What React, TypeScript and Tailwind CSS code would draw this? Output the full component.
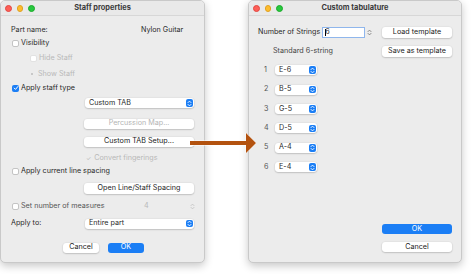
import React from "react";

const font = { fontFamily: "Inter, 'Liberation Sans', sans-serif" };

const Lights = () => (
  <div className="flex items-center gap-[5px] absolute left-[4px] top-[4px]">
    <span className="w-[6.5px] h-[6.5px] rounded-full bg-[#fe5f57] border border-[#e14640]" />
    <span className="w-[6.5px] h-[6.5px] rounded-full bg-[#febc2e] border border-[#dfa123]" />
    <span className="w-[6.5px] h-[6.5px] rounded-full bg-[#28c840] border border-[#1aab29]" />
  </div>
);

const Window = ({ title, className, children }) => (
  <div
    className={`relative shrink-0 h-[263px] rounded-[5px] bg-[#ececec] border border-[#c9c9c9] shadow-[0_3px_9px_rgba(0,0,0,0.22)] overflow-hidden ${className}`}
  >
    <div className="relative h-[15px] bg-[#e9e9e9] border-b border-[#d7d7d7] flex items-center justify-center">
      <Lights />
      <span className="text-[7.4px] font-bold text-[#3a3a3a]">{title}</span>
    </div>
    {children}
  </div>
);

const Chevrons = ({ color = "white" }) => (
  <svg width="5" height="7" viewBox="0 0 5 7">
    <path d="M1 2.6 L2.5 1.1 L4 2.6 M1 4.4 L2.5 5.9 L4 4.4" fill="none" stroke={color} strokeWidth="0.9" strokeLinecap="round" strokeLinejoin="round" />
  </svg>
);

const Checkbox = ({ checked = false, faint = false }) =>
  checked ? (
    <span className="w-[7px] h-[7px] rounded-[2px] bg-[#1b7ef5] flex items-center justify-center">
      <svg width="6" height="6" viewBox="0 0 6 6">
        <path d="M1.2 3.1 L2.5 4.4 L4.9 1.5" fill="none" stroke="white" strokeWidth="1" strokeLinecap="round" strokeLinejoin="round" />
      </svg>
    </span>
  ) : (
    <span
      className={`w-[7px] h-[7px] rounded-[2px] bg-white border ${faint ? "border-[#e2e2e2]" : "border-[#c4c4c4]"}`}
    />
  );

const Popup = ({ label, className }) => (
  <div
    className={`h-[10px] bg-white rounded-[3px] shadow-[0_0.5px_1.5px_rgba(0,0,0,0.3)] flex items-center justify-between pl-[4px] pr-[1.5px] ${className}`}
  >
    <span className="text-[7.2px] text-[#2a2a2a]">{label}</span>
    <span className="w-[6.5px] h-[7.5px] rounded-[2px] bg-[#1b7ef5] flex items-center justify-center">
      <Chevrons />
    </span>
  </div>
);

const Btn = ({ label, disabled = false, primary = false, className = "" }) => (
  <div
    className={`h-[10.5px] rounded-[3px] flex items-center justify-center text-[7.2px] ${
      primary
        ? "bg-[#1b7ef5] text-white"
        : "bg-white shadow-[0_0.5px_1.5px_rgba(0,0,0,0.3)] " + (disabled ? "text-[#b4b4b4]" : "text-[#222]")
    } ${className}`}
  >
    {label}
  </div>
);

const StaffProperties = () => (
  <Window title="Staff properties" className="w-[205px]">
    <div className="text-[7.2px] text-[#2a2a2a]">
      <div className="h-[12px] mt-[8px] flex items-center pl-[10px]">
        <span className="w-[130px]">Part name:</span>
        <span>Nylon Guitar</span>
      </div>
      <div className="h-[12px] mt-[1px] flex items-center pl-[11px] gap-[2px]">
        <Checkbox />
        <span>Visibility</span>
      </div>
      <div className="h-[12px] mt-[3px] flex items-center pl-[29px] gap-[2px] text-[#b8b8b8]">
        <Checkbox faint />
        <span>Hide Staff</span>
      </div>
      <div className="h-[12px] mt-[4px] flex items-center pl-[30px] gap-[5px] text-[#b8b8b8]">
        <span className="w-[2px] h-[2px] rounded-full bg-[#bdbdbd]" />
        <span>Show Staff</span>
      </div>
      <div className="h-[12px] mt-[2px] flex items-center pl-[11px] gap-[2px]">
        <Checkbox checked />
        <span>Apply staff type</span>
      </div>
      <Popup label="Custom TAB" className="ml-[84px] w-[109px] mt-[4px]" />
      <Btn label="Percussion Map..." disabled className="ml-[83px] w-[110px] mt-[10.5px]" />
      <Btn label="Custom TAB Setup..." className="ml-[83px] w-[110px] mt-[7.5px]" />
      <div className="h-[12px] mt-[5px] flex items-center pl-[85px] gap-[3px] text-[#b8b8b8]">
        <span className="text-[6px]">✓</span>
        <span>Convert fingerings</span>
      </div>
      <div className="h-[12px] mt-[1px] flex items-center pl-[11px] gap-[2px]">
        <Checkbox />
        <span>Apply current line spacing</span>
      </div>
      <Btn label="Open Line/Staff Spacing" className="ml-[83px] w-[110px] mt-[6px]" />
      <div className="h-[12px] mt-[6.5px] flex items-center pl-[11px]">
        <Checkbox />
        <span className="ml-[2px] w-[123px] text-[#555]">Set number of measures</span>
        <span className="w-[46px] text-[#b8b8b8]">4</span>
        <Chevrons color="#c4c4c4" />
      </div>
      <div className="h-[12px] mt-[5.5px] flex items-center pl-[10px]">
        <span className="w-[74px]">Apply to:</span>
        <Popup label="Entire part" className="w-[109px]" />
      </div>
      <div className="flex mt-[13px] ml-[62px] gap-[9px]">
        <Btn label="Cancel" className="w-[36px]" />
        <Btn label="OK" primary className="w-[36px]" />
      </div>
    </div>
  </Window>
);

const strings = ["E-6", "B-5", "G-5", "D-5", "A-4", "E-4"];

const CustomTab = () => (
  <Window title="Custom tabulature" className="w-[214px] ml-[43px]">
    <div className="text-[7.2px] text-[#2a2a2a]">
      <div className="h-[11px] mt-[11px] flex items-center pl-[9px]">
        <span className="w-[64px]">Number of Strings</span>
        <div className="w-[43px] h-[11px] bg-white border-[1.5px] border-[#8fb6ec] flex items-center pl-[2px]">
          <span className="w-[0.8px] h-[7px] bg-black" />
          <span className="-ml-[0.5px]">6</span>
        </div>
        <span className="ml-[2px]">
          <Chevrons color="#7a7a7a" />
        </span>
        <Btn label="Load template" className="w-[70px] ml-[10px]" />
      </div>
      <div className="h-[11px] mt-[8px] flex items-center">
        <span className="ml-[24px] w-[109px] text-[#444]">Standard 6-string</span>
        <Btn label="Save as template" className="w-[70px]" />
      </div>
      <div className="mt-[3.5px]">
        {strings.map((s, i) => (
          <div key={s} className="h-[19.4px] flex items-center">
            <span className="w-[26px] pl-[15px] text-[#555]">{i + 1}</span>
            <Popup label={s} className="w-[42px]" />
          </div>
        ))}
      </div>
      <div className="flex flex-col items-end pr-[9px] mt-[47px] gap-[7.5px]">
        <Btn label="OK" primary className="w-[70px]" />
        <Btn label="Cancel" className="w-[70px]" />
      </div>
    </div>
  </Window>
);

export default function App() {
  return (
    <div className="relative w-[474px] h-[274px] bg-white flex items-start overflow-hidden" style={font}>
      <StaffProperties />
      <CustomTab />
      <svg className="absolute left-[188px] top-[131px]" width="72" height="24" viewBox="0 0 72 24">
        <path
          d="M2 10 L58 10 L58 2 L68 12 L58 22 L58 14 L2 14 Z"
          fill="#b3520f"
          stroke="white"
          strokeWidth="1"
          paintOrder="stroke"
        />
      </svg>
    </div>
  );
}
